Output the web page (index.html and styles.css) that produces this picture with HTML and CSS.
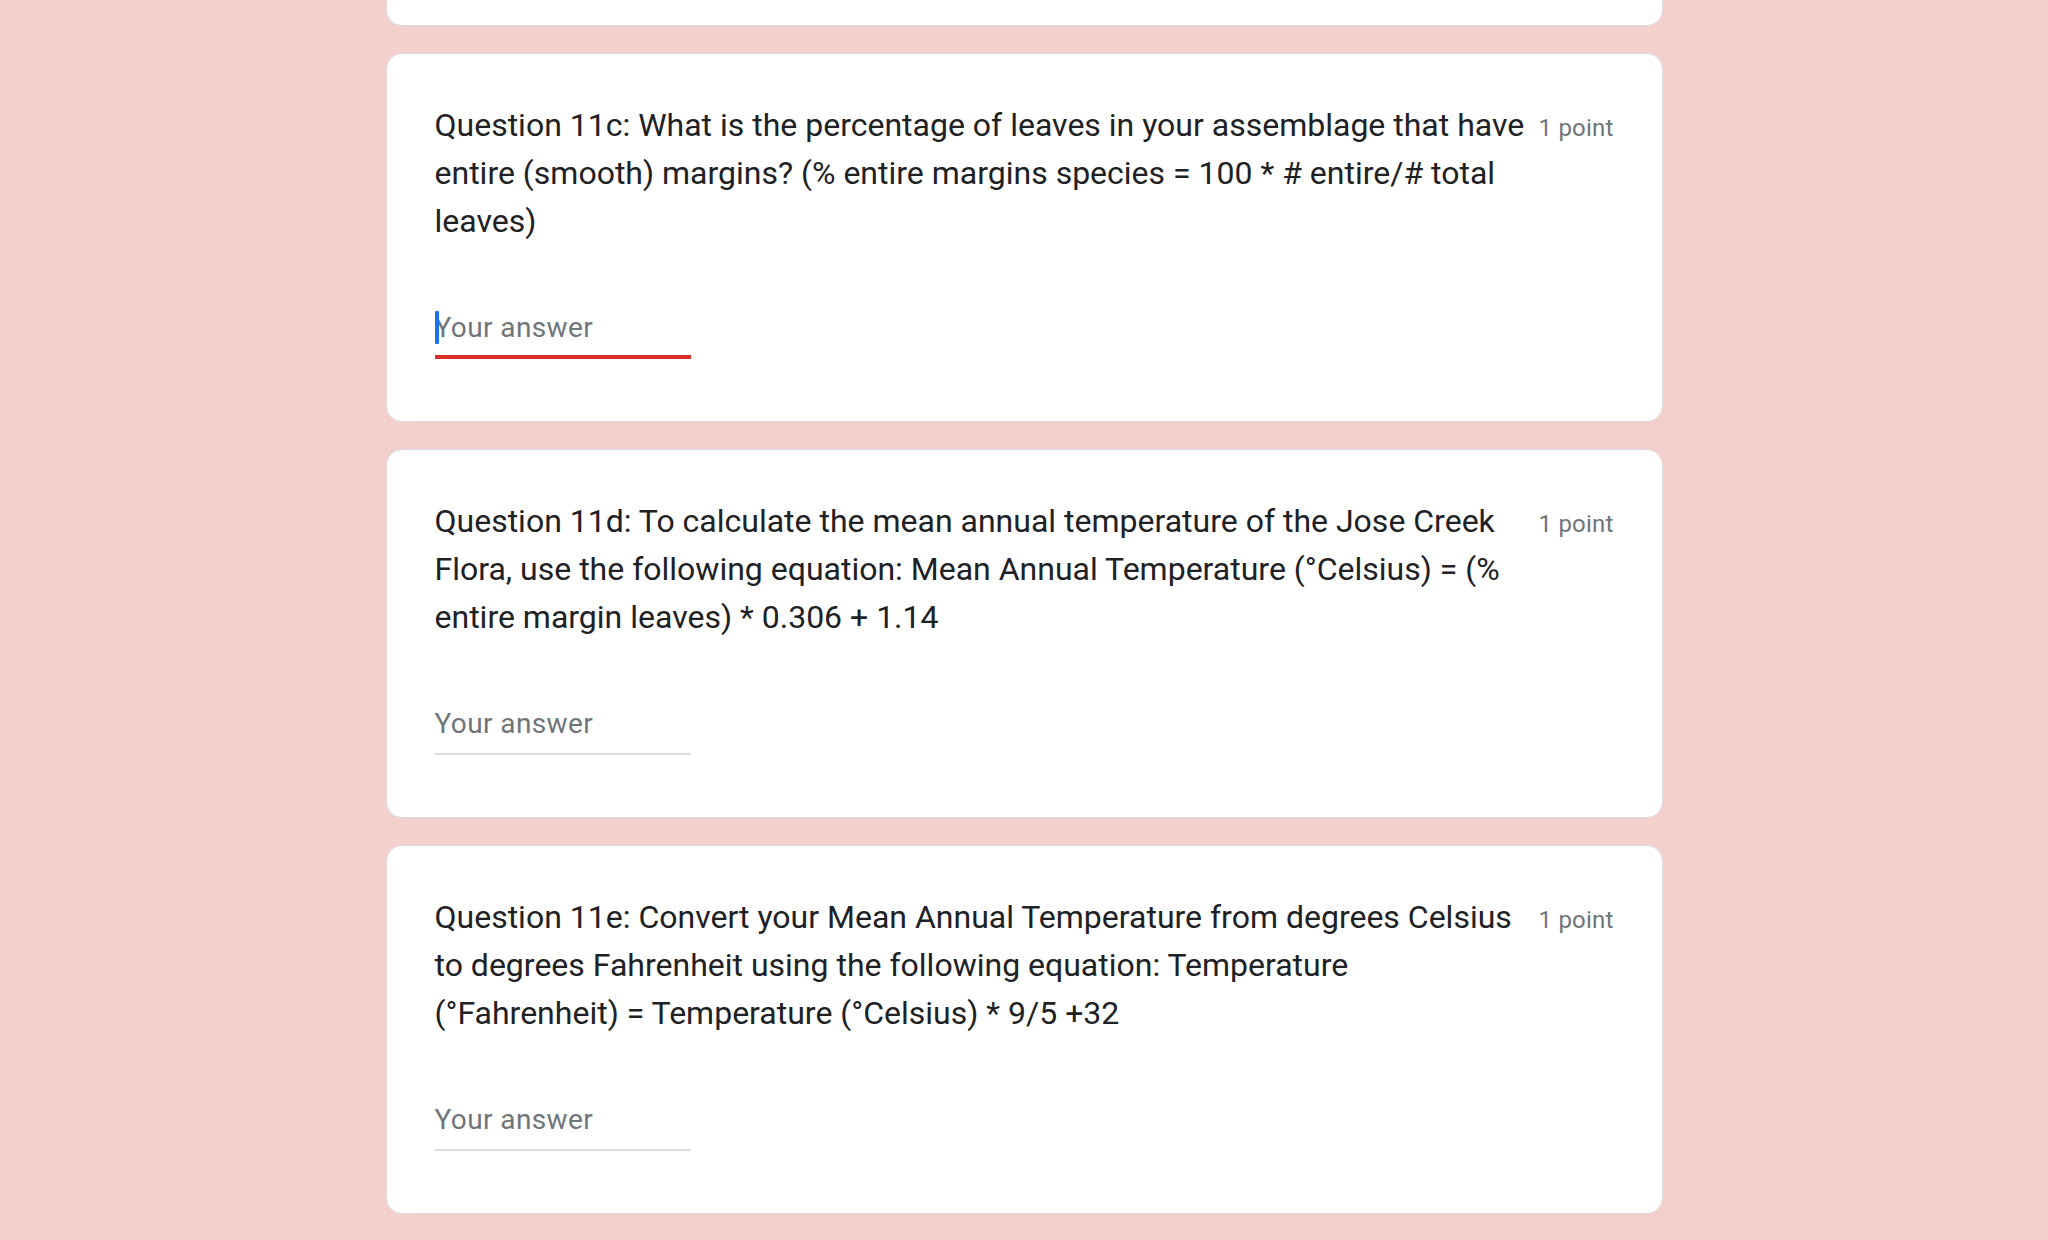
FILE: index.html
```html
<!DOCTYPE html>
<html lang="en">
<head>
<meta charset="utf-8">
<title>Form</title>
<link rel="stylesheet" href="styles.css">
</head>
<body>
<main class="form">
  <div class="card-tail"></div>

  <section class="card">
    <div class="q-head">
      <div class="q-title">Question 11c: What is the percentage of leaves in your assemblage that have entire (smooth) margins? (% entire margins species = 100 * # entire/# total leaves)</div>
      <div class="q-points">1 point</div>
    </div>
    <div class="answer focused"><span class="caret"></span><span class="placeholder">Your answer</span></div>
  </section>

  <section class="card">
    <div class="q-head">
      <div class="q-title">Question 11d: To calculate the mean annual temperature of the Jose Creek Flora, use the following equation: Mean Annual Temperature (°Celsius) = (% entire margin leaves) * 0.306 + 1.14</div>
      <div class="q-points">1 point</div>
    </div>
    <div class="answer"><span class="placeholder">Your answer</span></div>
  </section>

  <section class="card">
    <div class="q-head">
      <div class="q-title">Question 11e: Convert your Mean Annual Temperature from degrees Celsius to degrees Fahrenheit using the following equation: Temperature (°Fahrenheit) = Temperature (°Celsius) * 9/5 +32</div>
      <div class="q-points">1 point</div>
    </div>
    <div class="answer"><span class="placeholder">Your answer</span></div>
  </section>
</main>
</body>
</html>
```
FILE: styles.css
```css
html, body {
  margin: 0;
  padding: 0;
  background: #f4d0cd;
  font-family: Roboto, "Liberation Sans", Arial, sans-serif;
}

.form {
  width: 1277px;
  margin: 0 auto;
  display: flex;
  flex-direction: column;
  gap: 27px;
  padding-bottom: 40px;
}

.card-tail {
  height: 25px;
  background: #fff;
  border: 1px solid #dadce0;
  border-top: none;
  border-radius: 0 0 16px 16px;
}

.card {
  box-sizing: border-box;
  background: #fff;
  border: 1px solid #dadce0;
  border-radius: 16px;
  padding: 47px 48px 62px 48px;
}

.q-head {
  display: flex;
  align-items: flex-start;
}

.q-title {
  flex: 1;
  font-size: 32px;
  line-height: 48px;
  color: #202124;
}

.q-points {
  margin-left: 10px;
  font-size: 24px;
  line-height: 48px;
  letter-spacing: 0.2px;
  color: #70757a;
  white-space: nowrap;
  padding-top: 3px;
}

.answer {
  position: relative;
  width: 256px;
  margin-top: 63px;
  padding-bottom: 9px;
  border-bottom: 2px solid #dadce0;
  font-size: 28px;
  line-height: 40px;
  letter-spacing: 0.4px;
  color: #70757a;
}

.answer.focused::after {
  content: "";
  position: absolute;
  left: 0;
  right: 0;
  bottom: -2px;
  height: 4px;
  background: #d93025;
}

.caret {
  position: absolute;
  left: 0;
  top: 3px;
  width: 4px;
  height: 33px;
  border-radius: 1px;
  background: #1a73e8;
}
```
